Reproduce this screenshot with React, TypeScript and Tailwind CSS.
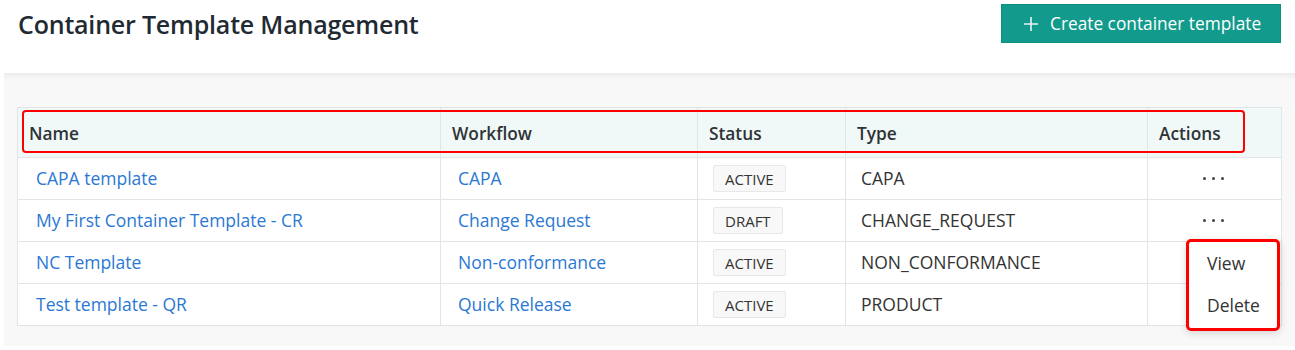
import React from "react";

const rows = [
  { name: "CAPA template", wf: "CAPA", status: "ACTIVE", type: "CAPA", dots: true },
  { name: "My First Container Template - CR", wf: "Change Request", status: "DRAFT", type: "CHANGE_REQUEST", dots: true },
  { name: "NC Template", wf: "Non-conformance", status: "ACTIVE", type: "NON_CONFORMANCE", dots: false },
  { name: "Test template - QR", wf: "Quick Release", status: "ACTIVE", type: "PRODUCT", dots: false },
];

export default function App() {
  return (
    <div className="relative w-[1295px] h-[350px] bg-white overflow-hidden" style={{ fontFamily: '"Open Sans", "Noto Sans", sans-serif' }}>
      <div className="flex items-start justify-between h-[73px] pl-[18px] pr-[14px]">
        <h1 className="mt-[6px] text-[25px] font-semibold text-[#1f2a33] leading-[36px] tracking-[-0.2px]">Container Template Management</h1>
        <button className="mt-[4px] flex items-center gap-[11px] h-[39px] w-[280px] pl-[21px] bg-[#129b8c] text-white text-[17.3px] leading-none border border-[#0e8e80]">
          <svg width="16" height="16" viewBox="0 0 16 16" className="shrink-0">
            <path d="M8 1v14M1 8h14" stroke="#e6f5f3" strokeWidth="1.6" />
          </svg>
          <span>Create container template</span>
        </button>
      </div>
      <div className="ml-[4px] h-[273px] bg-[#f8f8f8] shadow-[inset_0_7px_6px_-5px_rgba(0,0,0,0.07)] pt-[34px] pl-[13px] pr-[14px]">
        <table className="w-[1264px] border-collapse table-fixed bg-white text-[17.5px]">
          <colgroup>
            <col className="w-[423px]" />
            <col className="w-[257px]" />
            <col className="w-[148px]" />
            <col className="w-[302px]" />
            <col className="w-[134px]" />
          </colgroup>
          <thead>
            <tr className="h-[50px] bg-[#f1f9f8]">
              {["Name", "Workflow", "Status", "Type", "Actions"].map((h) => (
                <th key={h} className="border border-[#e1e5e9] text-left font-semibold text-[#2f3335] pl-[11px] pt-[2px] text-[17.3px]">{h}</th>
              ))}
            </tr>
          </thead>
          <tbody>
            {rows.map((r) => (
              <tr key={r.name} className="h-[42px]">
                <td className="border border-[#e1e5e9] pl-[18px] text-[#2b78d4]">{r.name}</td>
                <td className="border border-[#e1e5e9] pl-[17px] text-[#2b78d4]">{r.wf}</td>
                <td className="border border-[#e1e5e9] pl-[15px]">
                  <span className="inline-flex items-center h-[27px] px-[11px] bg-[#f8f8f8] border border-[#e8e8e8] rounded-[2px] text-[15px] text-[#333]">{r.status}</span>
                </td>
                <td className="border border-[#e1e5e9] pl-[15px] text-[#333]">{r.type}</td>
                <td className="border border-[#e1e5e9]">
                  {r.dots && (
                    <div className="flex gap-[6px] pl-[55px]">
                      <span className="w-[3px] h-[3px] rounded-full bg-[#444]" />
                      <span className="w-[3px] h-[3px] rounded-full bg-[#444]" />
                      <span className="w-[3px] h-[3px] rounded-full bg-[#444]" />
                    </div>
                  )}
                </td>
              </tr>
            ))}
          </tbody>
        </table>
      </div>
      {/* annotation around header */}
      <div className="absolute left-[22px] top-[110px] w-[1223px] h-[43px] border-[2.5px] border-[#ff0000] rounded-[4px] pointer-events-none" />
      {/* dropdown menu */}
      <div className="absolute left-[1186px] top-[239px] w-[94px] h-[92px] bg-white border-[3px] border-[#ff0000] rounded-[5px] shadow-[0_2px_8px_rgba(0,0,0,0.15)] flex flex-col pl-[18px] text-[17.5px] text-[#333]">
        <div className="h-[42px] flex items-center">View</div>
        <div className="h-[42px] flex items-center">Delete</div>
      </div>
    </div>
  );
}
